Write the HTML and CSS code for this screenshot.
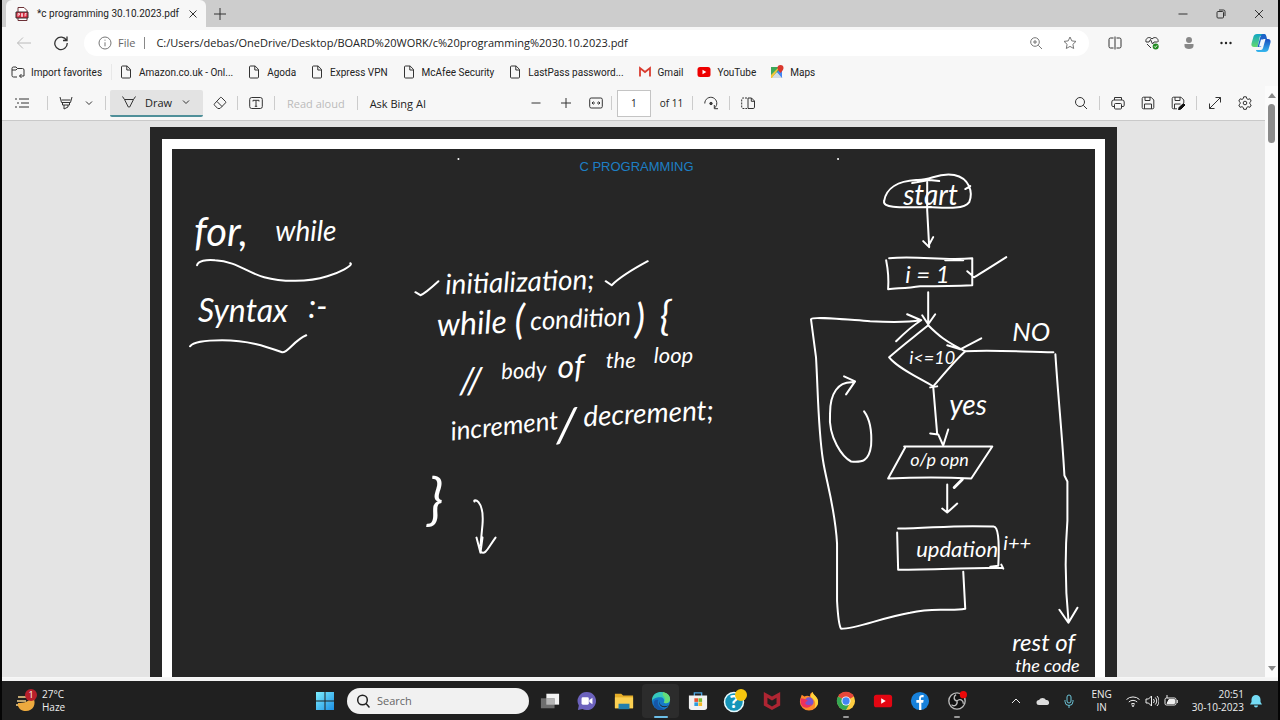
FILE: index.html
```html
<!DOCTYPE html>
<html lang="en">
<head>
<meta charset="utf-8">
<title>c programming 30.10.2023.pdf</title>
<link rel="stylesheet" href="styles.css">
</head>
<body>
<svg class="defs" aria-hidden="true">
  <symbol id="doc" viewBox="0 0 14 14"><path d="M3.500 1h4.600l3.400 3.400V12a1 1 0 0 1-1 1h-7a1 1 0 0 1-1-1V2a1 1 0 0 1 1-1zM7.800 1v4h3.700"/></symbol>
  <symbol id="chev" viewBox="0 0 10 10"><path d="M2 3.500l3 3 3-3"/></symbol>
</svg>
<div class="browser">
  <header class="tabs">
    <div class="tab">
      <svg class="ic14 pdf" viewBox="0 0 14 14"><path d="M3 .5h6l3 3v10H3z" fill="#fff" stroke="#6b3036"/><path d="M1 5h12v6H1z" fill="#d8263c"/><path d="M3 9.500V6.500h1.500v1.500H3M6.500 6.500v3h1V6.500zM10 9.500v-3h1.500M10 8h1.500" fill="none" stroke="#fff" stroke-width=".7"/></svg>
      <span class="tab-title">*c programming 30.10.2023.pdf</span>
      <button class="close" aria-label="Close tab"><svg class="ic10" viewBox="0 0 10 10"><path d="M1.500 1.500l7 7M8.500 1.500l-7 7"/></svg></button>
    </div>
    <button class="newtab" aria-label="New tab"><svg class="ic14" viewBox="0 0 14 14"><path d="M7 1v12M1 7h12"/></svg></button>
    <div class="winctl">
      <button aria-label="Minimise"><svg class="ic10" viewBox="0 0 10 10"><path d="M.5 5h9"/></svg></button>
      <button aria-label="Restore"><svg class="ic10" viewBox="0 0 10 10"><rect x="1" y="2.500" width="6.500" height="6.500" rx="1"/><path d="M3 1h4.500A1.500 1.500 0 0 1 9 2.500V7"/></svg></button>
      <button aria-label="Close window"><svg class="ic10" viewBox="0 0 10 10"><path d="M1 1l8 8M9 1L1 9"/></svg></button>
    </div>
  </header>

  <div class="address">
    <button class="nav faded" aria-label="Back"><svg class="ic16" viewBox="0 0 16 16"><path d="M15 8H1.500M7 2.500L1.500 8 7 13.500"/></svg></button>
    <button class="nav" aria-label="Refresh"><svg class="ic16" viewBox="0 0 16 16"><path d="M13.500 5.500A6.200 6.200 0 1 0 14.200 8M14 1.500v4h-4" stroke-width="1.300"/></svg></button>
    <div class="pill">
      <svg class="ic14 grey" viewBox="0 0 14 14"><circle cx="7" cy="7" r="6"/><path d="M7 6.300v4M7 3.700v1"/></svg>
      <span class="file">File</span><span class="bar"></span>
      <input class="url" aria-label="Address" value="C:/Users/debas/OneDrive/Desktop/BOARD%20WORK/c%20programming%2030.10.2023.pdf">
      <button aria-label="Zoom"><svg class="ic14 grey" viewBox="0 0 14 14"><circle cx="6" cy="6" r="4.300"/><path d="M9.300 9.300L13 13M4 6h4M6 4v4"/></svg></button>
      <button aria-label="Favourite"><svg class="ic14 grey" viewBox="0 0 14 14"><path d="M7 1l1.800 3.900 4.200.5-3.100 2.900.8 4.200L7 10.400l-3.700 2.100.8-4.200L1 5.400l4.200-.5z"/></svg></button>
    </div>
    <button class="nav" aria-label="Split screen"><svg class="ic14" viewBox="0 0 14 14"><path d="M5.500 2H2.500a1.500 1.500 0 0 0-1.500 1.500v7A1.500 1.500 0 0 0 2.500 12h3M8.500 2h3A1.500 1.500 0 0 1 13 3.500v7a1.500 1.500 0 0 1-1.500 1.500h-3M7 .5v13"/></svg></button>
    <button class="nav" aria-label="Browser essentials"><svg class="ic14" viewBox="0 0 14 14"><path d="M6 12L2 8M1 6C0 2 4.500 0 7 3c2.500-3 7-1 6 3M1 6h3l1.500-2.500L7.500 8 9 6h3.500"/><circle cx="10.700" cy="10.500" r="3" fill="#228b22" stroke="none"/><path d="M9.300 10.500l1 1 1.700-2" stroke="#fff"/></svg></button>
    <button class="nav" aria-label="Profile"><svg class="ic14" viewBox="0 0 14 14"><g fill="#888" stroke="none"><circle cx="7" cy="4" r="3"/><path d="M2.500 8h9v2c0 2-2 3-4.500 3s-4.500-1-4.500-3z"/></g></svg></button>
    <button class="nav" aria-label="More"><svg class="ic14" viewBox="0 0 14 14"><g fill="#222" stroke="none"><circle cx="2.500" cy="7" r="1.200"/><circle cx="7" cy="7" r="1.200"/><circle cx="11.500" cy="7" r="1.200"/></g></svg></button>
    <button class="nav last" aria-label="Copilot"><svg class="ic20" viewBox="0 0 20 20"><defs><linearGradient id="cg" x2="0" y2="1"><stop stop-color="#10a6c5"/><stop offset="1" stop-color="#65d96e"/></linearGradient><linearGradient id="cb" x2="0" y2="1"><stop stop-color="#174ec0"/><stop offset="1" stop-color="#35b8ee"/></linearGradient></defs><path d="M6 1h7c1 0 2 1 2 2H9L6.500 14H3c-2 0-3-1.500-2.500-3.500l2-7C3 2 4 1 6 1z" fill="url(#cg)" stroke="none"/><path d="M14 19H7c-1 0-2-1-2-2h5c1 0 1.500-1 2-2l2.500-9H17c2 0 3 1.500 2.500 3.500l-2 7C17 18 16 19 14 19z" fill="url(#cb)" stroke="none"/><path d="M12 1h1c2 0 2.500 2 3 5h-3.500L10 14H6.500l2.800-10c.5-2 1.500-3 2.700-3z" fill="#1d63c9" stroke="none"/><path d="M10 6.500h3l-2 7H8z" fill="#eef8ff" stroke="none"/></svg></button>
  </div>

  <nav class="bookmarks">
    <a href="#"><svg class="ic14" viewBox="0 0 14 14"><path d="M6 12H2.500A1.500 1.500 0 0 1 1 10.500v-7A1.500 1.500 0 0 1 2.500 2H5l1.500 1.500h5A1.500 1.500 0 0 1 13 5v6M1 5h4l1.500-1.500M13 11H8.500M10.500 9l-2 2 2 2"/></svg>Import favorites</a>
    <span class="divider"></span>
    <a href="#"><svg class="ic14"><use href="#doc"/></svg>Amazon.co.uk - Onl...</a>
    <a href="#"><svg class="ic14"><use href="#doc"/></svg>Agoda</a>
    <a href="#"><svg class="ic14"><use href="#doc"/></svg>Express VPN</a>
    <a href="#"><svg class="ic14"><use href="#doc"/></svg>McAfee Security</a>
    <a href="#"><svg class="ic14"><use href="#doc"/></svg>LastPass password...</a>
    <a href="#"><svg class="ic14" viewBox="0 0 14 14"><path d="M2 11.500V3l5 4 5-4v8.500" stroke="#d93c30" stroke-width="1.800"/></svg>Gmail</a>
    <a href="#"><svg class="ic14" viewBox="0 0 14 14"><rect x=".5" y="2" width="13" height="10" rx="2.500" fill="#e00" stroke="none"/><path d="M5.500 4.800v4.400L9.300 7z" fill="#fff" stroke="none"/></svg>YouTube</a>
    <a href="#"><svg class="ic14" viewBox="0 0 14 14"><g stroke="none"><path d="M1 2h11v11H1z" fill="#3ca85a"/><path d="M1 13l6-6 6 6z" fill="#d5dbe2"/><path d="M7 7l5-4v10z" fill="#4285f4"/><path d="M1 10l8-8h1L2 13H1z" fill="#f6c63a"/><path d="M10.500 0a3 3 0 0 1 3 3c0 2-3 5-3 5s-3-3-3-5a3 3 0 0 1 3-3z" fill="#da382d"/></g></svg>Maps</a>
  </nav>

  <main class="reader">
    <div class="column">
      <div class="toolbar">
        <div class="group left">
          <button class="tool list" aria-label="Contents"><svg class="ic14" viewBox="0 0 14 14"><path d="M4 3h10M6 7h8M4 11h10M0 3h2M2 7h2M0 11h2"/></svg></button>
          <span class="sep"></span>
          <button class="tool wide" aria-label="Highlight"><svg class="ic14" viewBox="0 0 14 14"><path d="M1 1l1.500 5.500h9L13 1M2.500 4h9M3.500 6.500V9h7V6.500M5 9v4l4-2V9"/></svg></button>
          <button class="drop" aria-label="Highlight colours"><svg class="ic10"><use href="#chev"/></svg></button>
          <span class="sep"></span>
          <button class="draw"><svg class="ic14" viewBox="0 0 14 14"><path d="M.5 1.500l2 3h9l2-3M2.500 4.500L6.300 12h1.400l3.800-7.500"/></svg>Draw<svg class="ic10"><use href="#chev"/></svg></button>
          <button class="tool" aria-label="Erase"><svg class="ic14" viewBox="0 0 14 14"><path d="M8.500 1.500l4 4a1 1 0 0 1 0 1.400L7 12.500H4.800L1.500 9.200a1 1 0 0 1 0-1.400L7.300 1.500a1 1 0 0 1 1.200 0zM4 5.500l5 5"/></svg></button>
          <span class="sep"></span>
          <button class="tool wide" aria-label="Add text"><svg class="ic14" viewBox="0 0 14 14"><rect x=".7" y="1.500" width="12.600" height="11" rx="2"/><path d="M4 5.500V4.300h6v1.200M7 4.300v6M5.800 10.300h2.400"/></svg></button>
          <span class="sep"></span>
          <button class="word" disabled>Read aloud</button>
          <span class="sep"></span>
          <button class="word">Ask Bing AI</button>
        </div>
        <div class="group mid">
          <button class="tool" aria-label="Zoom out"><svg class="ic10" viewBox="0 0 10 10"><path d="M.5 5h9"/></svg></button>
          <button class="tool" aria-label="Zoom in"><svg class="ic10" viewBox="0 0 10 10"><path d="M0 5h10M5 0v10"/></svg></button>
          <button class="tool" aria-label="Fit to width"><svg class="ic14" viewBox="0 0 14 14"><rect x=".7" y="2" width="12.600" height="10" rx="1.500"/><path d="M3 7h3M4.500 5.500L3 7l1.500 1.500M8 7h3M9.500 5.500L11 7 9.500 8.500"/></svg></button>
          <span class="sep"></span>
          <input class="pageno" aria-label="Page number" value="1">
          <span class="count">of 11</span>
          <span class="sep"></span>
          <button class="tool wide" aria-label="Rotate"><svg class="ic14" viewBox="0 0 14 14"><path d="M.8 7.500A6 6 0 1 1 10.500 12M10.300 9v3.700H14"/><circle cx="7" cy="7.500" r="1.200" fill="#444"/></svg></button>
          <span class="sep"></span>
          <button class="tool wide" aria-label="Page view"><svg class="ic14" viewBox="0 0 14 14"><path d="M6 2H2a1.300 1.300 0 0 0-1.300 1.300v8A1.300 1.300 0 0 0 2 12.500h4" stroke-dasharray="2 1"/><path d="M7 2h3.500l3 3v6.300a1.300 1.300 0 0 1-1.300 1.200H7zM10.300 2v3.300h3"/></svg></button>
        </div>
        <div class="group right">
          <button class="tool" aria-label="Find"><svg class="ic14" viewBox="0 0 14 14"><circle cx="6" cy="6" r="4.500"/><path d="M9.300 9.300L13 13"/></svg></button>
          <span class="sep"></span>
          <button class="tool" aria-label="Print"><svg class="ic14" viewBox="0 0 14 14"><path d="M3.500 10.500H2a1.200 1.200 0 0 1-1.200-1.200V6A2 2 0 0 1 2.800 4h8.400a2 2 0 0 1 2 2v3.300a1.200 1.200 0 0 1-1.200 1.200h-1.500M3.500 4V1.500h7V4"/><rect x="3.500" y="7.500" width="7" height="5.500" rx="1"/></svg></button>
          <button class="tool" aria-label="Save"><svg class="ic14" viewBox="0 0 14 14"><path d="M2.500 1.200h7.500l2.800 2.800v7.500a1.300 1.300 0 0 1-1.300 1.300h-9a1.300 1.300 0 0 1-1.300-1.300v-9a1.300 1.300 0 0 1 1.300-1.300zM4 1.200v3.300h5V1.200M3.500 12.800V8h7v4.800"/></svg></button>
          <button class="tool" aria-label="Save as"><svg class="ic14" viewBox="0 0 14 14"><path d="M6 12.800H2.500a1.300 1.300 0 0 1-1.300-1.300v-9a1.300 1.300 0 0 1 1.300-1.300h7.500l2.800 2.800v3M4 1.200v3.300h5V1.200M3.500 12.800V8h6"/><path d="M12.500 7.500l1.500 1.500-4 4-2.500.7.700-2.400z" fill="#111" stroke="#111"/></svg></button>
          <span class="sep"></span>
          <button class="tool" aria-label="Full screen"><svg class="ic14" viewBox="0 0 14 14"><path d="M1.500 12.500l11-11M7.500 1.500h5v5M1.500 7.500v5h5"/></svg></button>
          <button class="tool" aria-label="Settings"><svg class="ic14" viewBox="0 0 14 14"><path d="M5.700.8h2.600l.5 1.900 1.200.7 1.900-.6 1.300 2.300-1.400 1.300v1.300l1.400 1.300-1.300 2.300-1.900-.6-1.200.7-.5 1.900H5.700l-.5-1.900-1.200-.7-1.900.6L.8 9l1.400-1.300V6.400L.8 5.100l1.300-2.300 1.900.6 1.200-.7z" stroke-linejoin="round"/><circle cx="7" cy="7" r="1.800"/></svg></button>
        </div>
      </div>
      <div class="viewer">
        <article class="page">
          <div class="board">
            <h1>C PROGRAMMING</h1>
            <svg class="ink" viewBox="172 149 922 527">
              <circle cx="458" cy="159" r="1" class="dot"/><circle cx="837" cy="159" r="1" class="dot"/>
              <g class="strokes">
                <path d="M197 265C198 261 206 259 215 260C236 261 248 273 264 277C282 282 308 282 327 276C338 273 354 265 350 263"/>
                <path d="M190 346C193 342 204 340 222 340C248 340 265 346 282 352C287 353 294 340 306 335"/>
                <path d="M415 292l5 3q5-2 18-14M605 281l6 4q10-10 36-24"/>
                <path d="M474 501C472 498 484 498 482 524L480 545M476 537l4 15 2-15M480 551c5 4 7-3 15-14"/>
                <path d="M883 201C885 188 897 181 915 180C930 181 936 172 953 175C968 178 972 192 968 202C963 209 948 208 930 207C905 207 881 209 883 201zM911 183l17-3 10 1M964 189l5-3"/>
                <path d="M926 182V210L928 247M922 241l5 5 5-9"/>
                <path d="M888 258C916 255 943 261 971 258V285C949 286 938 286 919 286C906 288 896 288 887 289Q888 275 885 260M944 260h18M966 271l7 6q10-6 32-20"/>
                <path d="M927 292V325M921 315l6 9 7-10"/>
                <path d="M962 571l2 37C947 611 934 606 909 612C880 617 856 628 840 628C838 625 837 618 836 600V543C834 507 825 480 822 460C817 428 817 390 815 357L810 319C811 316 841 319 869 321C890 322 908 322 919 320M906 314l14 6Q909 327 895 341"/>
                <path d="M927 325C937 335 944 341 964 351C955 359 945 371 932 386C917 377 897 368 888 357C899 347 911 338 927 325zM946 345l10 3 3 1 21-11"/>
                <path d="M964 351C993 349 1025 352 1052 352M1054 354C1057 400 1061 437 1063 475L1066 481V520C1063 559 1065 599 1067 619M1058 609l9 13 9-15"/>
                <path d="M932 386l4 48M929 387l7-1M929 433l8 1 5 11 5-16"/>
                <path d="M903 446H991L970 478Q931 476 887 478L904 447"/>
                <path d="M946 484V511M941 508l5 4 10-9"/>
                <path d="M897 528C929 528 951 524 992 526Q999 525 997 565M896 532L897 569C933 569 966 567 1001 567M989 566l8-1M1000 564l2 4"/>
                <path d="M843 376l11 5-9 13M852 382C837 381 829 393 829 413C827 438 842 457 850 461C861 462 868 461 870 445C871 429 869 419 863 411"/>
                <path d="M953 487l8-8" stroke-width="3"/>
              </g>
              <g class="hand">
                <text class="h40" x="194" y="246">for,</text><text class="h28" x="275" y="241">while</text>
                <text class="h32" x="198" y="322">Syntax</text><text class="h32" x="308" y="318">:-</text>
                <text class="h28" transform="translate(445 294) rotate(-2)">initialization;</text>
                <text class="h32" transform="translate(437 336) rotate(-3)">while</text>
                <text class="h40" x="514" y="334">(</text><text class="h26" transform="translate(530 330) rotate(-3)">condition</text><text class="h40" x="634" y="333">)</text><text class="h40" x="659" y="330">{</text>
                <text class="h36" x="459" y="394">//</text><text class="h22" transform="translate(501 379) rotate(-3)">body</text>
                <text class="h32" x="557" y="378">of</text><text class="h22" x="605" y="368">the</text><text class="h22" x="653" y="363">loop</text>
                <text class="h26" transform="translate(451 440) rotate(-6)">increment</text>
                <text class="h48" x="556" y="442">/</text>
                <text class="h28" transform="translate(583 426) rotate(-3)">decrement;</text>
                <text class="h56" x="427" y="518">}</text>
                <text class="h28" x="902" y="205">start</text>
                <text class="h24" x="904" y="283">i = 1</text>
                <text class="h18" x="908" y="364">i&lt;=10</text>
                <text class="h26" x="1011" y="341">NO</text>
                <text class="h28" x="948" y="415">yes</text>
                <text class="h18" x="909" y="466">o/p opn</text>
                <text class="h22" x="915" y="556">updation</text><text class="h20" x="1002" y="549">i++</text>
                <text class="h24" x="1011" y="650">rest of</text><text class="h18" x="1014" y="671">the code</text>
              </g>
            </svg>
          </div>
        </article>
      </div>
    </div>
    <div class="scroll"><span class="up"></span><span class="thumb"></span><span class="down"></span></div>
  </main>
</div>

<footer class="taskbar">
  <div class="weather">
    <svg class="ic24" viewBox="0 0 24 24"><path d="M4 8h9M3 12h9M2 16h10" stroke="#f5d28a" stroke-width="1.500"/><path d="M4 14c6 0 10-1 15-6 4 7 0 14-7 14-4 0-7-2-8-5z" fill="#edaa3e"/><circle cx="17" cy="6" r="6" fill="#b71f2b"/><text x="17" y="9" class="badge">1</text></svg>
    <div class="two"><span>27°C</span><span>Haze</span></div>
  </div>
  <div class="centre">
    <button class="start" aria-label="Start"><svg class="ic20" viewBox="0 0 20 20"><defs><linearGradient id="wg" x2="1" y2="1"><stop stop-color="#7defff"/><stop offset="1" stop-color="#1c8fe3"/></linearGradient></defs><path d="M1 1h8.500v8.500H1zM10.500 1H19v8.500h-8.500zM1 10.500h8.500V19H1zM10.500 10.500H19V19h-8.500z" fill="url(#wg)"/></svg></button>
    <label class="search"><svg class="ic14" viewBox="0 0 14 14"><circle cx="6.500" cy="6" r="4.800"/><path d="M10 9.500l3.500 4"/></svg><input placeholder="Search" aria-label="Search"></label>
    <button class="app" aria-label="Task view"><svg class="ic20" viewBox="0 0 22 22"><path d="M7 3h14v12H7z" fill="#f4f4f4"/><path d="M1 8h15v11H1z" fill="#777" opacity=".9"/><path d="M7 8h9v7H7z" fill="#b5b5b5"/></svg></button>
    <button class="app" aria-label="Chat"><svg class="ic20" viewBox="0 0 22 22"><path d="M11 1a10 10 0 1 1-5 18.700L1 21l1-5A10 10 0 0 1 11 1z" fill="#6c62bd"/><rect x="5" y="7" width="8" height="8" rx="1.500" fill="#fff"/><path d="M13.500 10L17 7.500v7L13.500 12z" fill="#fff"/></svg></button>
    <button class="app" aria-label="File Explorer"><svg class="ic20" viewBox="0 0 22 22"><path d="M1 3h7l2 2h11v14H1z" fill="#e5ad28"/><path d="M1 7h20v12H1z" fill="#fbd052"/><path d="M5 14h12v6H5z" fill="#237fae"/></svg></button>
    <button class="app current" aria-label="Edge"><svg class="ic20" viewBox="0 0 22 22"><circle cx="11" cy="11" r="10" fill="#1679c8"/><path d="M1 11C1 3 7 1 11 1c6 0 10 4 10 8 0 4-4 5-7 4 2-5-2-7-6-6-3 .5-6 2-7 4z" fill="#36c8bd"/><path d="M13 1c5 1 8 4 8 8 0 4-4 5-7 4 2-2 2-6-1-8z" fill="#65dc79"/><path d="M8 10c-2 5 2 9 7 10-6 3-12-1-12-6 0-3 2-5 5-4z" fill="#1657a8"/><path d="M9 11c0 5 5 7 10 5-4 4-11 1-10-5z" fill="#202124"/></svg></button>
    <button class="app" aria-label="Store"><svg class="ic20" viewBox="0 0 22 22"><path d="M7 6V2h8v4" stroke="#4aa4df" stroke-width="1.500" fill="none"/><path d="M1 5h20v13a3 3 0 0 1-3 3H4a3 3 0 0 1-3-3z" fill="#f2f2f2"/><path d="M7 8h4v4H7z" fill="#e75132"/><path d="M11.500 8h4v4h-4z" fill="#78b833"/><path d="M7 12.500h4v4H7z" fill="#2d9dde"/><path d="M11.500 12.500h4v4h-4z" fill="#f6ba27"/></svg></button>
    <button class="app" aria-label="Help"><svg class="ic24" viewBox="0 0 24 24"><circle cx="11" cy="13" r="9.500" fill="#1695b9" stroke="#e8fbff" stroke-width="1.500"/><text x="11" y="19" class="q">?</text><circle cx="18" cy="6" r="6" fill="#f7c60e"/></svg></button>
    <button class="app" aria-label="McAfee"><svg class="ic20" viewBox="0 0 22 22"><path d="M2 1l9 5 9-5v15l-9 5-9-5zM6 7.500v6.500l5 3 5-3V7.500L11 10.500z" fill="#ae2532" fill-rule="evenodd"/></svg></button>
    <button class="app" aria-label="Firefox"><svg class="ic20" viewBox="0 0 22 22"><path d="M3 4l3 2c2-1 4-1 6 0 0-3 1-4 3-5 0 3 6 5 6 11a10 9.500 0 0 1-20 0c0-3 1-5 2-8z" fill="#ff8a2a"/><path d="M15 1c0 3 6 5 6 11a10 9 0 0 1-4 7c2-5 1-9-4-12 0-3 1-5 2-6z" fill="#ffd43c"/><circle cx="11" cy="12" r="5" fill="#7953ce"/><path d="M2 8c3 0 6 1 8 3-2 0-3 1-3 3 2 2 5 2 7 0-1 5-8 6-11 2-1-2-2-5-1-8z" fill="#ed315e"/></svg></button>
    <button class="app running" aria-label="Chrome"><svg class="ic20" viewBox="0 0 22 22"><circle cx="11" cy="11" r="10" fill="#ffcd40"/><path d="M11 11L2.300 6A10 10 0 0 1 19.700 6z" fill="#e5463a"/><path d="M11 11L2.300 6A10 10 0 0 0 11 21l4-7z" fill="#35a853"/><circle cx="11" cy="11" r="5" fill="#fff"/><circle cx="11" cy="11" r="4" fill="#4285f4"/></svg></button>
    <button class="app" aria-label="YouTube"><svg class="ic20" viewBox="0 0 22 22"><rect x="1" y="4" width="20" height="14" rx="3" fill="#e30612"/><path d="M9 8v6l5-3z" fill="#fff"/></svg></button>
    <button class="app" aria-label="Facebook"><svg class="ic20" viewBox="0 0 22 22"><circle cx="11" cy="11" r="10" fill="#1781db"/><path d="M10 21v-8H7v-3h3V8c0-3 2-4 5-3.500V7h-1.500c-1 0-1.500.5-1.500 1.500V10h3l-.5 3H12.500v8z" fill="#fff"/></svg></button>
    <button class="app running" aria-label="OBS"><svg class="ic20" viewBox="0 0 22 22"><circle cx="11" cy="11" r="9" fill="#111" stroke="#bbb" stroke-width="1.500"/><path d="M11 11C7 10 7 6 10 4M11 11c3-3 7-1 7 3M11 11c1 4-3 7-6 4" stroke="#bbb" stroke-width="1.500" fill="none"/><circle cx="18" cy="4" r="4" fill="#ec0909"/></svg></button>
  </div>
  <div class="tray">
    <svg class="ic10 line" viewBox="0 0 10 10"><path d="M1 7l4-4 4 4"/></svg>
    <svg class="ic14 cloud" viewBox="0 0 14 14"><path d="M3 11a2.500 2.500 0 0 1 0-5 4 4 0 0 1 7 0 2.500 2.500 0 1 1 1 5z" fill="#ddd"/></svg>
    <svg class="ic14 mic" viewBox="0 0 14 14"><rect x="5" y="1" width="4" height="8" rx="2"/><path d="M3 6v1.500a4 4 0 0 0 8 0V6M7 11.500V14"/></svg>
    <div class="two lang"><span>ENG</span><span>IN</span></div>
    <div class="status">
      <svg class="ic14 line" viewBox="0 0 14 14"><path d="M.5 5.500a9.500 9.500 0 0 1 13 0M2.800 8a6.200 6.200 0 0 1 8.400 0M5 10.200a3 3 0 0 1 4 0"/><circle cx="7" cy="11.800" r=".8"/></svg>
      <svg class="ic14 line" viewBox="0 0 14 14"><path d="M1 5h2.500L6.500 2v10l-3-3H1zM8.500 5a3 3 0 0 1 0 4M10.300 3.500a5 5 0 0 1 0 7M12 2a7 7 0 0 1 0 10"/></svg>
      <svg class="ic14 line" viewBox="0 0 14 14"><rect x="1" y="4" width="11" height="7" rx="1.500"/><path d="M5 5.500h5.500v4H3z" fill="#eee"/><path d="M13.300 6v3M3 1v3"/></svg>
    </div>
    <div class="two clock"><span>20:51</span><span>30-10-2023</span></div>
    <svg class="ic14 bell" viewBox="0 0 14 14"><path d="M7 1a4.500 4.500 0 0 1 4.500 4.500V8l1.500 2.500H1L2.500 8V5.500A4.500 4.500 0 0 1 7 1zM5 11.500h4a2 2 0 0 1-4 0z" fill="#75dcf5"/></svg>
  </div>
</footer>
</body>
</html>
```
FILE: styles.css
```css
* { box-sizing: border-box; }
body { margin: 0; height: 100vh; display: flex; flex-direction: column; background: #050505; padding: 0 2px; overflow: hidden; font-family: "Open Sans", "Noto Sans", sans-serif; font-size: 10px; color: #222; }
button, input { font: inherit; color: inherit; background: none; border: 0; padding: 0; margin: 0; outline: 0; }
button { display: flex; align-items: center; justify-content: center; }
svg { flex: none; display: block; fill: none; }
.defs { position: absolute; width: 0; height: 0; }
.browser svg { stroke: #333; }
.browser .ink { stroke: none; }
.ic10 { width: 10px; height: 10px; }
.ic14 { width: 14px; height: 14px; }
.ic16 { width: 16px; height: 16px; }
.ic20 { width: 20px; height: 20px; }
.ic24 { width: 24px; height: 24px; }
.browser .grey { stroke: #777; }

.browser { flex: 1; min-height: 0; display: flex; flex-direction: column; background: #f7f7f7; }
.tabs { display: flex; height: 27px; background: #cdcdcd; padding-left: 4px; }
.tab { display: flex; align-items: center; width: 200px; padding: 0 7px 0 9px; background: #f7f7f7; border-radius: 6px 6px 0 0; }
.tab-title { flex: 1; margin-left: 8px; white-space: nowrap; font-family: Roboto, sans-serif; }
.close { width: 12px; }
.newtab { width: 28px; }
.winctl { display: flex; margin-left: auto; }
.winctl button { width: 38px; }

.address { display: flex; align-items: center; height: 31px; padding-left: 3px; }
.nav { width: 37px; height: 26px; }
.last { width: 34px; }
.faded { opacity: .3; }
.pill { flex: 1; display: flex; align-items: center; height: 26px; margin: 0 7px 0 5px; padding: 0 2px 0 14px; background: #fff; border-radius: 13px; font-size: 11px; }
.pill button { width: 34px; }
.file { margin-left: 6px; color: #666; }
.bar { width: 1px; height: 12px; margin: 0 11px 0 9px; background: #888; }
.url { flex: 1; min-width: 0; }

.bookmarks { display: flex; align-items: center; gap: 14px; height: 28px; padding-left: 9px; font-family: Roboto, sans-serif; }
.bookmarks a { display: flex; align-items: center; gap: 6px; color: #222; text-decoration: none; white-space: nowrap; }
.divider { width: 1px; height: 16px; margin: 0 -7px 0 -5px; background: #e8e8e8; }

.reader { flex: 1; min-height: 0; display: flex; padding-bottom: 1px; }
.column { flex: 1; min-width: 0; display: flex; flex-direction: column; }
.toolbar { display: flex; height: 35px; border-bottom: 1px solid #c9c9c9; font-size: 11px; }
.group { display: flex; align-items: center; }
.left, .right { flex: 1 1 0; min-width: 0; }
.left { padding-left: 7px; }
.mid { padding-left: 18px; }
.right { justify-content: flex-end; padding-right: 5px; }
.right .sep { margin: 0 3px; }
.tool { width: 30px; height: 26px; }
.wide { width: 36px; }
.list { width: 26px; margin-right: 12px; }
.sep { width: 1px; height: 14px; background: #ccc; }
.drop { width: 10px; margin-right: 11px; }
.draw { width: 93px; height: 27px; margin-left: 4px; gap: 9px; background: #e3e3e3; border-bottom: 2px solid #4f8f99; border-radius: 2px; }
.draw + .tool { width: 34px; }
.word { padding: 0 12px; white-space: nowrap; }
.word:disabled { color: #bbb; }
.pageno { width: 34px; height: 27px; margin-left: 5px; background: #fff; border: 1px solid #c4c4c4; text-align: center; font-size: 10px; }
.count { margin: 0 9px; font-size: 10px; }

.viewer { flex: 1; min-height: 0; overflow: hidden; padding-top: 6px; background: #e4e4e4; }
.page { width: 76.6%; margin: 0 auto; padding: 12px 12px 0; background: #262626; }
.board { display: grid; background: #262626; border: solid #fff; border-width: 10px 10px 0; }
.board > * { grid-area: 1 / 1; }
h1 { margin: 10px 0 0; padding-left: 6px; text-align: center; font: 13px/15px "Liberation Sans", Arial, sans-serif; color: #1d7fc4; }
.ink { width: 100%; }
.dot { fill: #fff; }
.strokes { fill: none; stroke: #fff; stroke-width: 2; stroke-linecap: round; stroke-linejoin: round; }
.hand { fill: #fff; font-family: Lato, "Open Sans", sans-serif; font-style: italic; font-weight: 400; }
.h18 { font-size: 18px; }
.h20 { font-size: 20px; }
.h22 { font-size: 22px; }
.h24 { font-size: 24px; }
.h26 { font-size: 26px; }
.h28 { font-size: 28px; }
.h32 { font-size: 32px; }
.h36 { font-size: 36px; }
.h40 { font-size: 40px; }
.h48 { font-size: 48px; }
.h56 { font-size: 56px; }

.scroll { width: 13px; display: flex; flex-direction: column; align-items: center; padding: 7px 0 6px; background: #fbfbfb; }
.up, .down { border: solid transparent; border-width: 0 4px; }
.up { border-bottom: 5px solid #888; }
.down { border-top: 5px solid #888; margin-top: auto; }
.thumb { width: 7px; height: 39px; margin-top: 6px; border-radius: 4px; background: #8b8b8b; }

.taskbar { display: grid; grid-template-columns: 1fr auto 1fr; height: 42px; background: #202020; border-top: 3px solid #f4f4f4; color: #eee; }
.taskbar > div { display: flex; align-items: center; }
.weather { padding-left: 12px; gap: 4px; }
.two { display: flex; flex-direction: column; line-height: 13px; }
.badge { fill: #fff; font-size: 9px; text-anchor: middle; }
.q { fill: #fff; font-size: 17px; font-weight: 700; text-anchor: middle; }
.centre { margin-left: 10px; }
.start { width: 20px; margin-right: 12px; }
.search { display: flex; align-items: center; gap: 7px; width: 182px; height: 26px; padding-left: 9px; margin-right: 2px; background: #f1f1f1; border-radius: 13px; color: #555; font-size: 11px; }
.search svg { stroke: #222; stroke-width: 1.5; }
.search input { width: 140px; }
.search input::placeholder { color: #666; opacity: 1; }
.app { position: relative; width: 37px; height: 34px; }
.current { background: #2c2c2c; border-radius: 4px; }
.current::after, .running::after { content: ""; position: absolute; bottom: 0; left: 50%; width: 6px; height: 2px; margin-left: -3px; background: #999; border-radius: 1px; }
.current::after { width: 14px; margin-left: -7px; background: #6cbfe8; }
.tray { justify-content: flex-end; padding-right: 15px; }
.line { stroke: #eee; }
.cloud { margin-left: 15px; }
.mic { margin-left: 12px; stroke: #6cc5d8; }
.lang { margin-left: 15px; text-align: center; }
.status { display: flex; gap: 5px; margin-left: 14px; }
.clock { margin-left: 14px; text-align: right; }
.bell { margin-left: 5px; }
```
